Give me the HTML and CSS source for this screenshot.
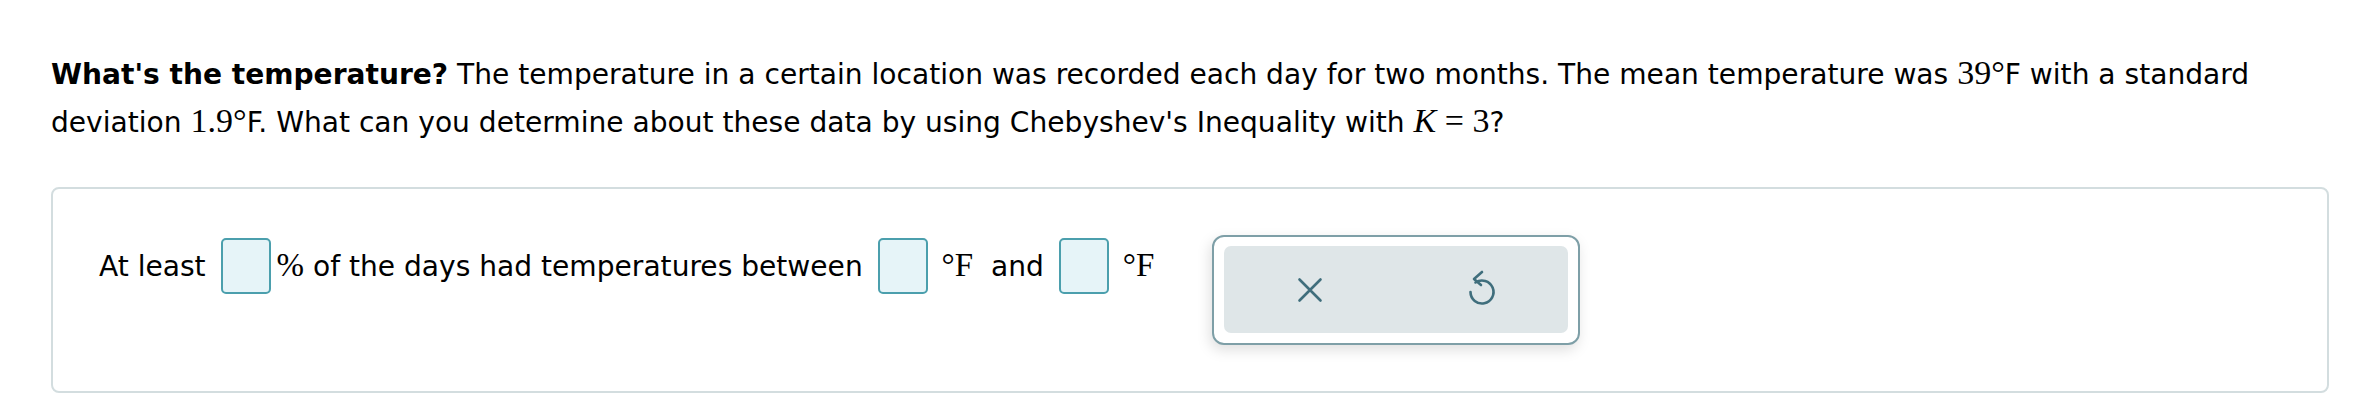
FILE: index.html
```html
<!DOCTYPE html>
<html>
<head>
<meta charset="utf-8">
<link rel="stylesheet" href="styles.css">
</head>
<body>
<div class="page">
  <p class="question"><b>What's the temperature?</b> The temperature in a certain location was recorded each day for two months. The mean temperature was <span class="m">39°</span>F with a standard deviation <span class="m">1.9°</span>F. What can you determine about these data by using Chebyshev's Inequality with <span class="m"><i>K</i> = 3</span>?</p>
  <div class="card">
    <div class="row">
      <div class="sentence">At least <span class="inp first"></span><span class="m">%</span> of the days had temperatures between <span class="inp"></span> <span class="m">°F</span> &nbsp;and <span class="inp"></span> <span class="m">°F</span></div>
      <div class="tools">
        <div class="tools-inner">
          <div class="btn">
            <svg class="ico-x" width="26" height="26" viewBox="0 0 26 26"><path d="M2.5 2.5 L23.5 23.5 M23.5 2.5 L2.5 23.5" fill="none" stroke="#3f6e7c" stroke-width="2.6" stroke-linecap="round"/></svg>
          </div>
          <div class="btn">
            <svg class="ico-undo" width="32" height="40" viewBox="0 0 32 40"><path d="M9.5 14.5 A11.5 11.5 0 1 1 4.5 24" fill="none" stroke="#3f6e7c" stroke-width="2.6" stroke-linecap="round"/><path d="M16 4 L8 11 L15 17" fill="none" stroke="#3f6e7c" stroke-width="2.6" stroke-linecap="round" stroke-linejoin="round"/></svg>
          </div>
        </div>
      </div>
    </div>
  </div>
</div>
</body>
</html>
```
FILE: styles.css
```css
html, body {
  margin: 0;
  padding: 0;
  background: #ffffff;
}
.page {
  padding: 51px 39px 0 51px;
  font-family: "DejaVu Sans", Verdana, sans-serif;
  font-size: 28.1px;
  color: #000000;
}
.question {
  margin: 0 0 40px 0;
  line-height: 48px;
}
.m {
  font-family: "Liberation Serif", "Times New Roman", serif;
  font-size: 33px;
  line-height: 1;
}
.question .m {
  font-size: 34px;
}
.m i {
  font-style: italic;
}
.card {
  border: 2px solid #d3dddf;
  border-radius: 8px;
  height: 156px;
  box-sizing: content-box;
  padding: 46px 46px 0 46px;
}
.row {
  display: flex;
  align-items: flex-start;
}
.sentence {
  margin-top: 3px;
  line-height: 58px;
  white-space: nowrap;
}
.inp {
  display: inline-block;
  vertical-align: top;
  box-sizing: border-box;
  width: 50px;
  height: 56px;
  border: 2px solid #4b9fad;
  border-radius: 5px;
  background: #e6f4f8;
  margin: 0 5px 0 6px;
}
.inp.first {
  margin-right: 6px;
}
.tools {
  margin-left: 58px;
  border: 2px solid #7e9fa7;
  border-radius: 12px;
  background: #ffffff;
  padding: 9px 10px 10px 10px;
  box-shadow: -2px 5px 14px rgba(0, 0, 0, 0.13);
}
.tools-inner {
  display: flex;
  width: 344px;
  height: 87px;
  background: #dfe6e8;
  border-radius: 7px;
}
.btn {
  flex: 1;
  display: flex;
  align-items: center;
  justify-content: center;
}
.ico-undo {
  margin-top: -4px;
}
```
